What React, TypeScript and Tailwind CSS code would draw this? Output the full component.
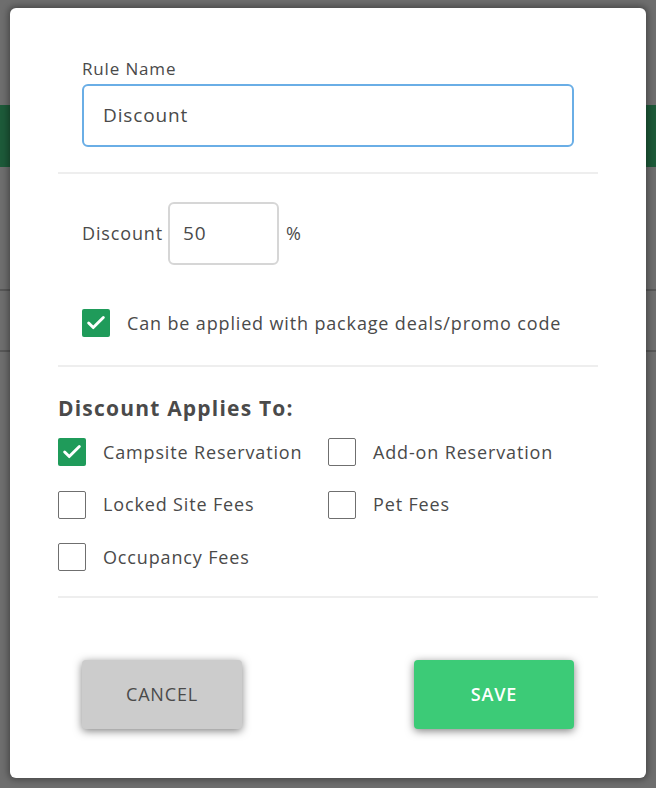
import { Check } from 'lucide-react'

const font = { fontFamily: '"Open Sans", Lato, sans-serif' }

function Box({ checked }: { checked?: boolean }) {
  if (checked) {
    return (
      <span className="flex h-[28px] w-[28px] shrink-0 items-center justify-center rounded-[2px] bg-[#1f9b5a]">
        <Check className="h-[22px] w-[22px] text-white" strokeWidth={3.2} />
      </span>
    )
  }
  return <span className="h-[28px] w-[28px] shrink-0 rounded-[2px] border border-[#6f6f6f] bg-white" />
}

function Option({ label, checked }: { label: string; checked?: boolean }) {
  return (
    <label className="flex h-[28px] items-center gap-[17px]">
      <Box checked={checked} />
      <span className="text-[18px] text-[#4a4a4a]">{label}</span>
    </label>
  )
}

const options = [
  { label: 'Campsite Reservation', checked: true },
  { label: 'Add-on Reservation' },
  { label: 'Locked Site Fees' },
  { label: 'Pet Fees' },
  { label: 'Occupancy Fees' },
]

export default function App() {
  return (
    <div className="relative h-[788px] w-[656px] overflow-hidden bg-[#6e6e6e] tracking-[0.85px]" style={font}>
      {/* page behind the overlay */}
      <div className="mt-[105px] h-[62px] bg-[#1d5a39]" />
      <div className="mt-[122px] h-[2px] bg-[#575757]" />
      <div className="mt-[59px] h-[2px] bg-[#575757]" />

      {/* modal */}
      <div className="absolute left-[10px] top-[8px] flex h-[770px] w-[636px] flex-col rounded-[6px] bg-white shadow-[0_0_6px_2px_rgba(0,0,0,0.35)]">
        <div className="px-[72px] pt-[48px]">
          <div className="text-[17px] leading-[26px] text-[#4a4a4a]">Rule Name</div>
          <div className="mt-[2px] flex h-[63px] items-center rounded-[6px] border-2 border-[#6aaee6] px-[19px] text-[19px] text-[#4a4a4a]">
            Discount
          </div>
        </div>

        <div className="mx-[48px] mt-[25px] h-[2px] bg-[#eeeeee]" />

        <div className="mt-[28px] flex items-center px-[72px] text-[18px] text-[#4a4a4a]">
          <span>Discount</span>
          <div className="ml-[5px] flex h-[63px] w-[111px] items-center rounded-[6px] border-2 border-[#d6d6d6] px-[13px] text-[19px]">
            50
          </div>
          <span className="ml-[7px]">%</span>
        </div>

        <div className="mt-[44px] px-[72px]">
          <Option label="Can be applied with package deals/promo code" checked />
        </div>

        <div className="mx-[48px] mt-[28px] h-[2px] bg-[#eeeeee]" />

        <div className="px-[48px]">
          <div className="mt-[28px] text-[21px] font-bold leading-[26px] tracking-[1.2px] text-[#4a4a4a]">
            Discount Applies To:
          </div>
          <div className="mt-[17px] grid grid-cols-[270px_1fr] gap-y-[24.5px]">
            {options.map((o) => (
              <Option key={o.label} label={o.label} checked={o.checked} />
            ))}
          </div>
        </div>

        <div className="mx-[48px] mt-[25px] h-[2px] bg-[#eeeeee]" />

        <div className="mt-[62px] flex justify-between px-[72px]">
          <button className="h-[69px] w-[160px] rounded-[4px] bg-[#cccccc] text-[18px] text-[#4a4a4a] shadow-[0_2px_9px_rgba(0,0,0,0.5)]">
            CANCEL
          </button>
          <button className="h-[69px] w-[160px] rounded-[4px] bg-[#3ccb77] text-[18px] font-semibold text-white shadow-[0_2px_9px_rgba(0,0,0,0.5)]">
            SAVE
          </button>
        </div>
      </div>
    </div>
  )
}
